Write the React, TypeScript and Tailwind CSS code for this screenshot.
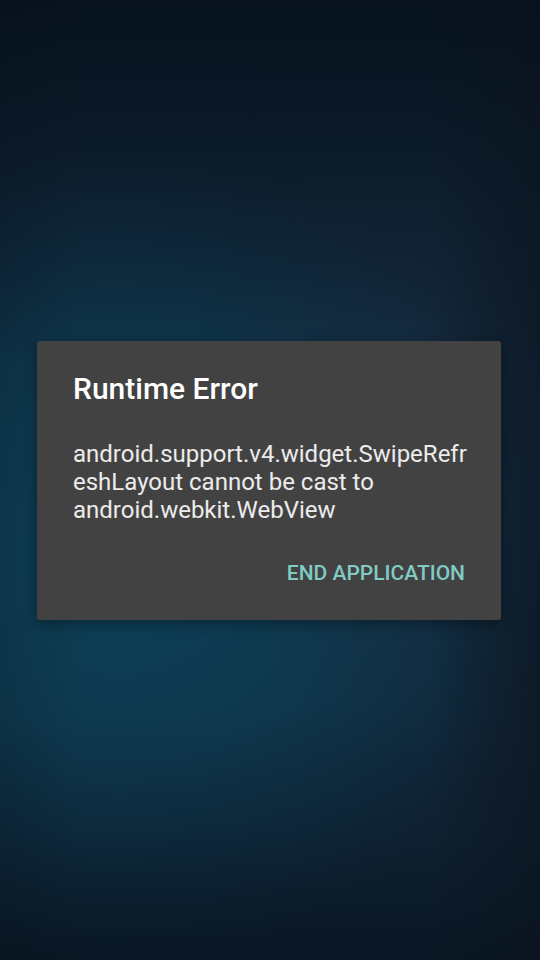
import React from "react";

// Android-style runtime error dialog over a blurred blue wallpaper
export default function App() {
  return (
    <div
      className="relative flex h-[960px] w-[540px] items-center justify-center overflow-hidden bg-[#112436]"
      style={{ fontFamily: "Roboto, 'Noto Sans', sans-serif" }}
    >
      {/* wallpaper layers */}
      <div
        aria-hidden="true"
        className="pointer-events-none absolute inset-0 bg-[radial-gradient(ellipse_80%_42%_at_22%_58%,#0d4158_0%,rgba(13,62,86,0.75)_50%,rgba(13,55,80,0)_100%)]"
      />
      <div
        aria-hidden="true"
        className="pointer-events-none absolute inset-0 bg-[radial-gradient(ellipse_35%_30%_at_72%_45%,rgba(28,48,70,0.6)_0%,rgba(28,48,70,0)_100%)]"
      />
      <div
        aria-hidden="true"
        className="pointer-events-none absolute inset-0 bg-[linear-gradient(to_bottom,rgba(4,14,24,0.8)_0%,rgba(4,14,24,0.25)_22%,rgba(4,14,24,0)_38%,rgba(4,14,24,0)_74%,rgba(4,14,24,0.2)_87%,rgba(4,14,24,0.6)_100%)]"
      />
      <div
        aria-hidden="true"
        className="pointer-events-none absolute inset-0 bg-[linear-gradient(to_right,rgba(4,14,24,0.15)_0%,rgba(4,14,24,0)_15%,rgba(4,14,24,0)_80%,rgba(10,18,28,0.5)_100%)]"
      />

      {/* dialog */}
      <div className="relative z-10 ml-[-2px] w-[464px] rounded-[3px] bg-[#424242] px-[36px] pb-[34px] pt-[30px] shadow-[0_4px_14px_rgba(0,0,0,0.35)]">
        <h1 className="text-[30px] font-medium leading-[35px] text-white">
          Runtime Error
        </h1>
        <div className="mt-[34px] text-[24px] leading-[28px] text-white/90">
          <span className="block">android.support.v4.widget.SwipeRefr</span>
          <span className="block">eshLayout cannot be cast to</span>
          <span className="block">android.webkit.WebView</span>
        </div>
        <div className="mt-[37px] flex justify-end">
          <button className="text-[21px] font-medium uppercase leading-[25px] text-[#80cbc4]">
            End Application
          </button>
        </div>
      </div>
    </div>
  );
}
